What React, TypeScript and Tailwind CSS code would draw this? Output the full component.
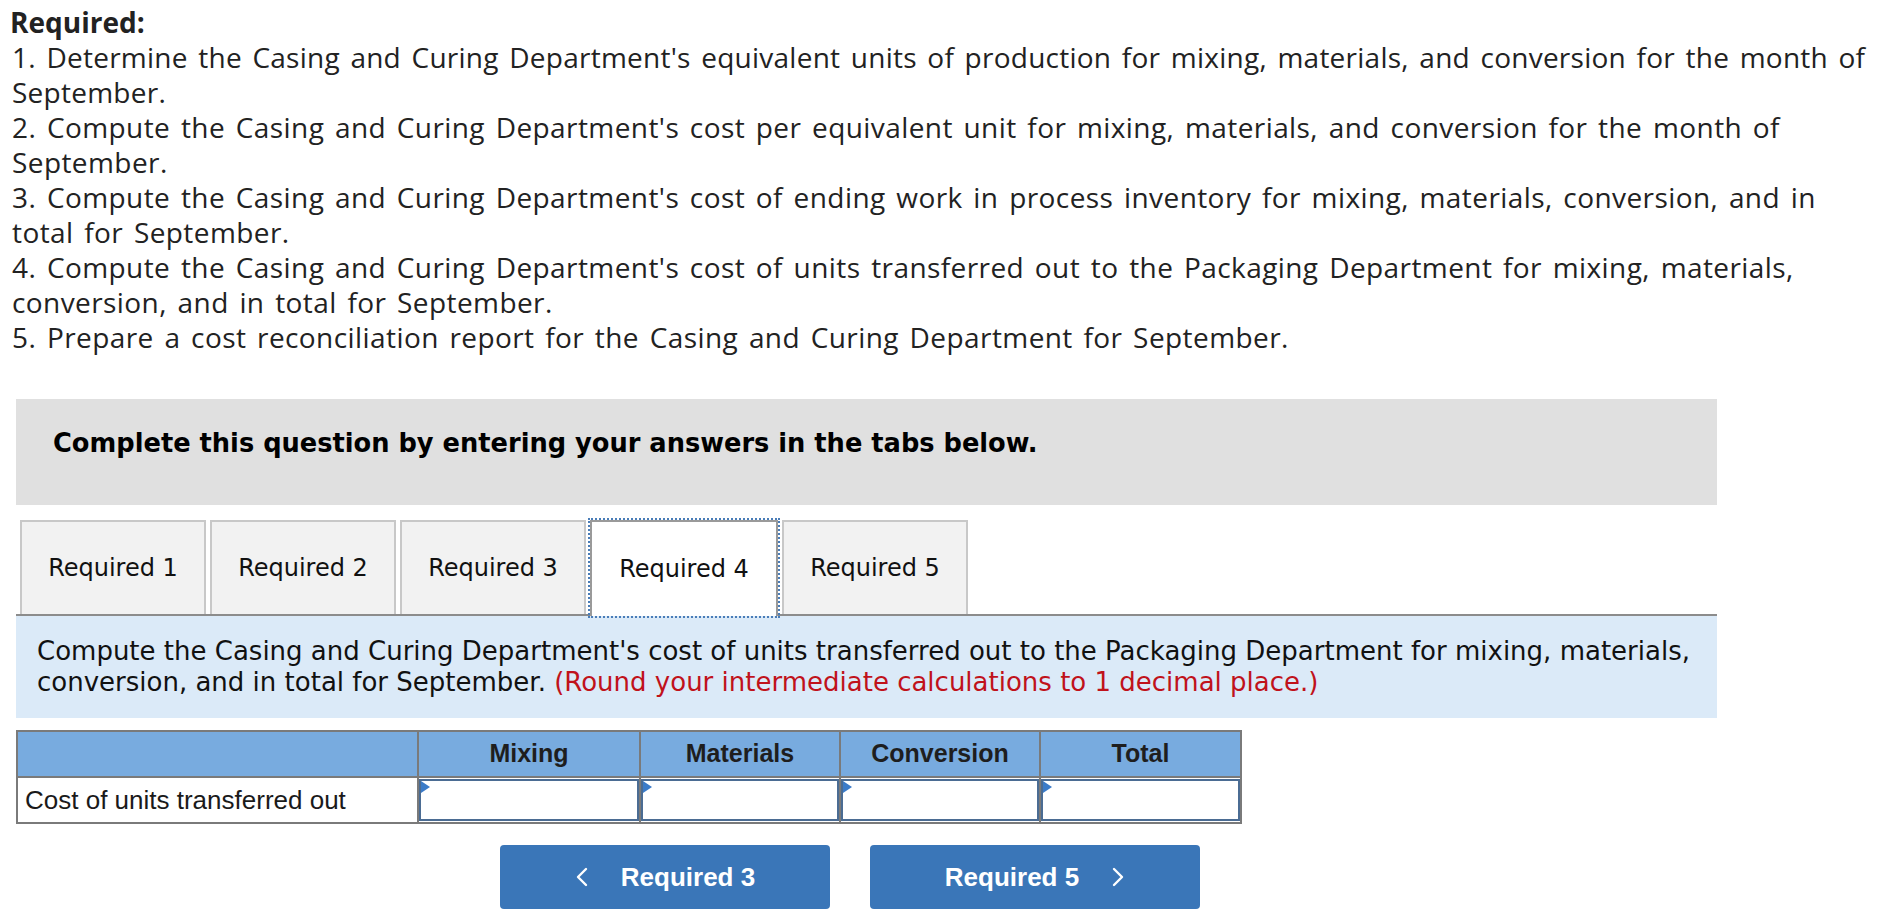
const items = [
  "1. Determine the Casing and Curing Department's equivalent units of production for mixing, materials, and conversion for the month of September.",
  "2. Compute the Casing and Curing Department's cost per equivalent unit for mixing, materials, and conversion for the month of September.",
  "3. Compute the Casing and Curing Department's cost of ending work in process inventory for mixing, materials, conversion, and in total for September.",
  "4. Compute the Casing and Curing Department's cost of units transferred out to the Packaging Department for mixing, materials, conversion, and in total for September.",
  "5. Prepare a cost reconciliation report for the Casing and Curing Department for September.",
];

function InputCell() {
  return (
    <td className="border-2 border-[#7a7a7a] p-0 h-[46px]">
      <div className="relative h-[42px] border-2 border-[#4b6c93] bg-white">
        <div className="absolute top-0 left-0 w-0 h-0 border-y-[6px] border-y-transparent border-l-[9px] border-l-[#3b7bc8]" />
      </div>
    </td>
  );
}

function Chevron({ dir }: { dir: 'left' | 'right' }) {
  return (
    <svg width="14" height="20" viewBox="0 0 14 20" fill="none" stroke="white" strokeWidth="2.4" strokeLinecap="round" strokeLinejoin="round">
      {dir === 'left' ? <polyline points="11,2 3,10 11,18" /> : <polyline points="3,2 11,10 3,18" />}
    </svg>
  );
}

export default function App() {
  const tabs = ['Required 1', 'Required 2', 'Required 3', 'Required 4', 'Required 5'];
  return (
    <div className="w-[1887px] h-[916px] bg-white overflow-hidden">
      <div className="px-3 pt-[5px] text-[28px] tracking-[0.42px] [word-spacing:3px] leading-[35px] text-[#222] font-['Open_Sans',sans-serif]">
        <div className="font-bold -ml-[2px] tracking-normal [word-spacing:0px]">Required:</div>
        {items.map((t, i) => (
          <div key={t} className={i === 0 ? 'tracking-[0.25px]' : ''}>
            {t}
          </div>
        ))}
      </div>

      <div className="ml-4 w-[1701px] mt-[44px]">
        <div className="h-[106px] bg-[#e0e0e0] pl-[37px] pt-[29px] font-['DejaVu_Sans',sans-serif] font-bold text-[25.7px] leading-[30px] text-black">
          Complete this question by entering your answers in the tabs below.
        </div>

        <div className="mt-[15px] flex items-end pl-[4px] gap-[4px] font-['DejaVu_Sans',sans-serif] text-[24px] text-[#111]">
          {tabs.map((t, i) =>
            i === 3 ? (
              <div
                key={t}
                className="relative z-10 -mb-[2px] w-[188px] h-[96px] bg-white border-2 border-b-0 border-[#9a9a9a] outline-2 outline-dotted outline-[#4a7db8] flex items-center justify-center"
              >
                {t}
              </div>
            ) : (
              <div
                key={t}
                className="w-[186px] h-[94px] bg-[#f2f2f2] border-2 border-b-0 border-[#c8c8c8] flex items-center justify-center"
              >
                {t}
              </div>
            )
          )}
        </div>

        <div className="border-t-2 border-[#8c8c8c] bg-[#dbeaf8] pl-[21px] pr-4 pt-[20px] pb-[20px] font-['DejaVu_Sans',sans-serif] text-[26px] leading-[31px] text-[#111]">
          Compute the Casing and Curing Department's cost of units transferred out to the Packaging Department for mixing, materials, conversion, and in total for September.{' '}
          <span className="text-[#c0121b]">(Round your intermediate calculations to 1 decimal place.)</span>
        </div>

        <table className="mt-[12px] border-collapse border-2 border-[#7a7a7a] font-['Liberation_Sans',Arial,sans-serif] text-[26px]">
          <thead>
            <tr className="bg-[#78abdf] h-[46px]">
              <th className="w-[401px] border-2 border-[#7a7a7a]"></th>
              <th className="w-[222px] border-2 border-[#7a7a7a] font-bold text-[#1e1e1e] text-[25px]">Mixing</th>
              <th className="w-[200px] border-2 border-[#7a7a7a] font-bold text-[#1e1e1e] text-[25px]">Materials</th>
              <th className="w-[200px] border-2 border-[#7a7a7a] font-bold text-[#1e1e1e] text-[25px]">Conversion</th>
              <th className="w-[201px] border-2 border-[#7a7a7a] font-bold text-[#1e1e1e] text-[25px]">Total</th>
            </tr>
          </thead>
          <tbody>
            <tr>
              <td className="border-2 border-[#7a7a7a] pl-[7px] text-left text-[#1a1a1a] h-[46px]">Cost of units transferred out</td>
              <InputCell />
              <InputCell />
              <InputCell />
              <InputCell />
            </tr>
          </tbody>
        </table>

        <div className="mt-[21px] ml-[484px] flex gap-[40px] font-['Liberation_Sans',Arial,sans-serif] font-bold text-[26px] text-white">
          <button className="w-[330px] h-[64px] rounded-[4px] bg-[#3a76b8] flex items-center justify-center gap-[32px]">
            <Chevron dir="left" />
            <span>Required 3</span>
          </button>
          <button className="w-[330px] h-[64px] rounded-[4px] bg-[#3a76b8] flex items-center justify-center gap-[32px]">
            <span>Required 5</span>
            <Chevron dir="right" />
          </button>
        </div>
      </div>
    </div>
  );
}
